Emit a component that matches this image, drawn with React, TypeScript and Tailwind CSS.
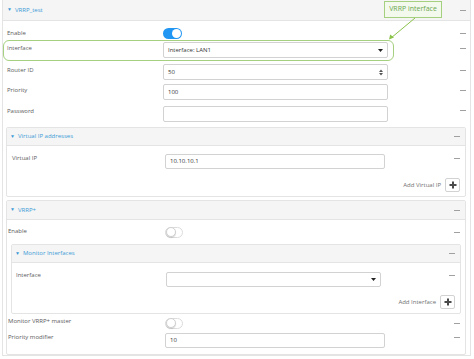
import React from "react"

const Minus = ({ cls = "" }: { cls?: string }) => (
    <div className={`ml-auto w-[6px] h-[1px] bg-[#a0a0a0] ${cls}`} />
)

const Caret = () => <span className="text-[#3d9bd6] text-[5px] mr-[3px]">▼</span>

const Toggle = ({ on }: { on: boolean }) =>
    on ? (
        <div className="w-[19px] h-[11px] rounded-full bg-[#2196f3] flex items-center justify-end pr-[1px]">
            <div className="w-[9px] h-[9px] rounded-full bg-white" />
        </div>
    ) : (
        <div className="w-[18px] h-[11px] rounded-full bg-white border border-[#dcdcdc] flex items-center">
            <div className="w-[10px] h-[10px] rounded-full bg-white border border-[#d0d0d0] shadow-[0_1px_1px_rgba(0,0,0,0.15)]" />
        </div>
    )

const Field = ({ value = "", right }: { value?: string; right?: React.ReactNode }) => (
    <div className="h-full w-full border border-[#d2d2d2] rounded-[2px] bg-white flex items-center pl-[4px] pr-[4px] text-[6px] text-[#333]">
        <span>{value}</span>
        {right && <span className="ml-auto flex items-center">{right}</span>}
    </div>
)

const ArrowDown = () => (
    <svg width="5" height="3" viewBox="0 0 5 3">
        <path d="M0 0h5L2.5 3z" fill="#222" />
    </svg>
)
const Spinner = () => (
    <svg width="4" height="7" viewBox="0 0 4 7">
        <path d="M0 3L2 0.5L4 3zM0 4L2 6.5L4 4z" fill="#555" />
    </svg>
)

const AddButton = ({ label }: { label: string }) => (
    <div className="flex items-center h-full">
        <span className="ml-auto text-[6px] text-[#707070] mr-[4px]">{label}</span>
        <div className="w-[15px] h-[14px] border border-[#d2d2d2] rounded-[2px] bg-white flex items-center justify-center">
            <svg width="8" height="8" viewBox="0 0 8 8">
                <path d="M4 0.5v7M0.5 4h7" stroke="#4a4a4a" strokeWidth="2" />
            </svg>
        </div>
    </div>
)

const Header = ({ title }: { title: string }) => (
    <div className="flex items-center bg-[#f5f5f5] border-b border-[#e4e4e4] h-[18px] pl-[3px] pr-[5px]">
        <Caret />
        <span className="text-[6px] text-[#3d9bd6]">{title}</span>
        <Minus />
    </div>
)

export default function App() {
    return (
        <div className="relative w-[474px] h-[359px] bg-white overflow-hidden font-['Open_Sans',sans-serif]">
            <div className="ml-[2px] mr-[3px] border-x border-b border-[#e4e4e4]">
                {/* main header */}
                <div className="flex items-center h-[21px] bg-[#f5f5f5] border-b border-[#e4e4e4] pl-[4px] pr-[4px]">
                    <Caret />
                    <span className="text-[6px] text-[#3d9bd6]">VRRP_test</span>
                    <Minus />
                </div>

                <div className="text-[6px] text-[#5c5c5c]">
                    <div className="flex items-center h-[18px] mt-[3px] pl-[4px] pr-[4px]">
                        <div className="w-[156px]">Enable</div>
                        <Toggle on />
                        <Minus />
                    </div>
                    <div className="flex items-center h-[16px] pl-[4px] pr-[4px]">
                        <div className="w-[156px] mb-[4px]">Interface</div>
                        <div className="w-[225px] h-full">
                            <Field value="Interface: LAN1" right={<ArrowDown />} />
                        </div>
                        <Minus cls="mb-[4px]" />
                    </div>
                    <div className="flex items-center h-[16px] mt-[6px] pl-[4px] pr-[4px]">
                        <div className="w-[156px] mb-[4px]">Router ID</div>
                        <div className="w-[225px] h-full">
                            <Field value="50" right={<Spinner />} />
                        </div>
                        <Minus cls="mb-[3px]" />
                    </div>
                    <div className="flex items-center h-[16px] mt-[4px] pl-[4px] pr-[4px]">
                        <div className="w-[156px] mb-[4px]">Priority</div>
                        <div className="w-[225px] h-full">
                            <Field value="100" />
                        </div>
                        <Minus cls="mb-[4px]" />
                    </div>
                    <div className="flex items-center h-[16px] mt-[6px] pl-[4px] pr-[4px]">
                        <div className="w-[156px] mb-[6px]">Password</div>
                        <div className="w-[225px] h-full">
                            <Field />
                        </div>
                        <Minus cls="mb-[7px]" />
                    </div>

                    {/* Virtual IP addresses */}
                    <div className="mt-[5px] ml-[3px] mr-[4px] border border-[#e4e4e4] rounded-[2px] pb-[4px]">
                        <Header title="Virtual IP addresses" />
                        <div className="flex items-center h-[15px] mt-[8px] pl-[5px] pr-[5px]">
                            <div className="w-[153px] mb-[6px]">Virtual IP</div>
                            <div className="w-[220px] h-full">
                                <Field value="10.10.10.1" />
                            </div>
                            <Minus cls="mb-[6px]" />
                        </div>
                        <div className="h-[14px] mt-[9px] pr-[5px]">
                            <AddButton label="Add Virtual IP" />
                        </div>
                    </div>

                    {/* VRRP+ */}
                    <div className="mt-[3px] ml-[3px] mr-[4px] border border-[#e4e4e4] rounded-[2px] pb-[6px]">
                        <div className="h-[19px] flex items-center bg-[#f5f5f5] border-b border-[#e4e4e4] pl-[3px] pr-[5px]">
                            <Caret />
                            <span className="text-[6px] text-[#3d9bd6]">VRRP+</span>
                            <Minus />
                        </div>
                        <div className="flex items-center h-[14px] mt-[5px] pl-[1px] pr-[5px]">
                            <div className="w-[157px] mb-[1px]">Enable</div>
                            <Toggle on={false} />
                            <Minus />
                        </div>

                        {/* Monitor Interfaces */}
                        <div className="mt-[5px] ml-[4px] mr-[4px] border border-[#e4e4e4] rounded-[2px] pb-[4px]">
                            <Header title="Monitor Interfaces" />
                            <div className="flex items-center h-[15px] mt-[9px] pl-[4px] pr-[5px]">
                                <div className="w-[150px] mb-[9px]">Interface</div>
                                <div className="w-[215px] h-full">
                                    <Field right={<ArrowDown />} />
                                </div>
                                <Minus cls="mb-[8px]" />
                            </div>
                            <div className="h-[14px] mt-[8px] pr-[5px]">
                                <AddButton label="Add Interface" />
                            </div>
                        </div>

                        <div className="flex items-center h-[12px] mt-[3px] pl-[1px] pr-[5px]">
                            <div className="w-[157px] mb-[3px]">Monitor VRRP+ master</div>
                            <Toggle on={false} />
                            <Minus />
                        </div>
                        <div className="flex items-center h-[15px] mt-[4px] pl-[1px] pr-[5px]">
                            <div className="w-[157px] mb-[7px]">Priority modifier</div>
                            <div className="w-[220px] h-full">
                                <Field value="10" />
                            </div>
                            <Minus cls="mb-[7px]" />
                        </div>
                    </div>
                </div>
            </div>

            {/* highlight around Interface row */}
            <div className="absolute left-[3px] top-[40px] w-[391px] h-[21px] border-[1.5px] border-[#a5d07f] rounded-[6px] pointer-events-none" />

            {/* callout */}
            <div className="absolute left-[384px] top-[1px] w-[58px] h-[17px] border border-[#a5d07f] bg-[#f4f9ee] flex items-center justify-center text-[7px] text-[#6aa84f]">
                VRRP interface
            </div>
            <svg className="absolute left-0 top-0 pointer-events-none" width="474" height="60">
                <line x1="415" y1="18" x2="391" y2="38" stroke="#8bc34a" strokeWidth="1" />
                <path d="M389 39.5 L390.2 34.5 L394 37.5 Z" fill="#8bc34a" />
            </svg>
        </div>
    )
}
